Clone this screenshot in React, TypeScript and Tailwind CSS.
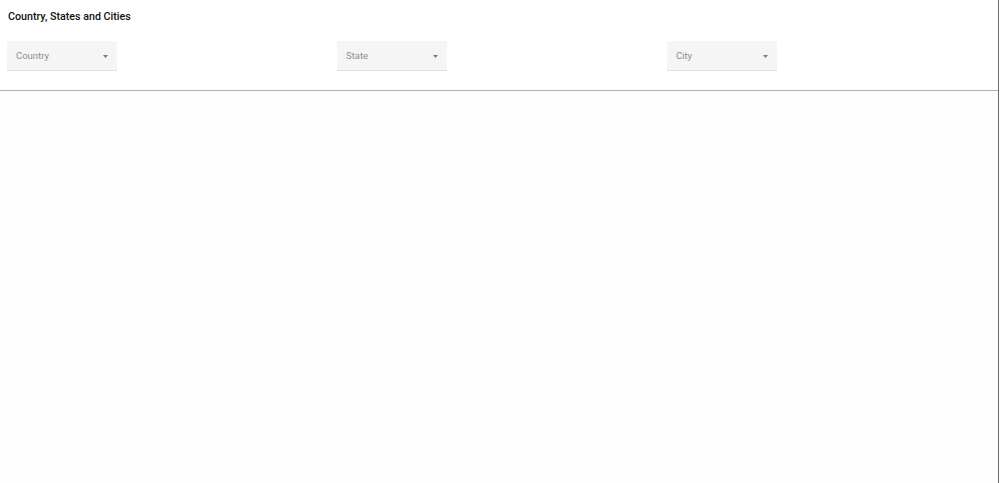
const fields = ['Country', 'State', 'City']

function SelectBox({ label }: { label: string }) {
  return (
    <div className="flex h-[30px] w-[110px] items-center justify-between border-b border-[#e0e0e0] bg-[#f5f5f5] pt-[2px] pr-[9px] pl-[9px]">
      <span className="text-[9.5px] text-[#8e8e8e]">{label}</span>
      <svg width="5" height="3" viewBox="0 0 5 3" aria-hidden="true">
        <path d="M0 0h5L2.5 3z" fill="#7a7a7a" />
      </svg>
    </div>
  )
}

export default function App() {
  return (
    <div
      className="h-[483px] w-[999px] overflow-hidden border-r border-[#6b6b6b] bg-[#fdfdfd]"
      style={{ fontFamily: 'Roboto, "Liberation Sans", sans-serif' }}
    >
      <div className="border-b border-[#b0b0b0] bg-white pt-[10px] pb-[19px] pl-[7px]">
        <h1 className="pl-px text-[10.7px] leading-[14px] font-medium text-[#111]">
          Country, States and Cities
        </h1>
        <div className="mt-[17px] grid grid-cols-[330px_330px_330px]">
          {fields.map((f) => (
            <SelectBox key={f} label={f} />
          ))}
        </div>
      </div>
    </div>
  )
}
